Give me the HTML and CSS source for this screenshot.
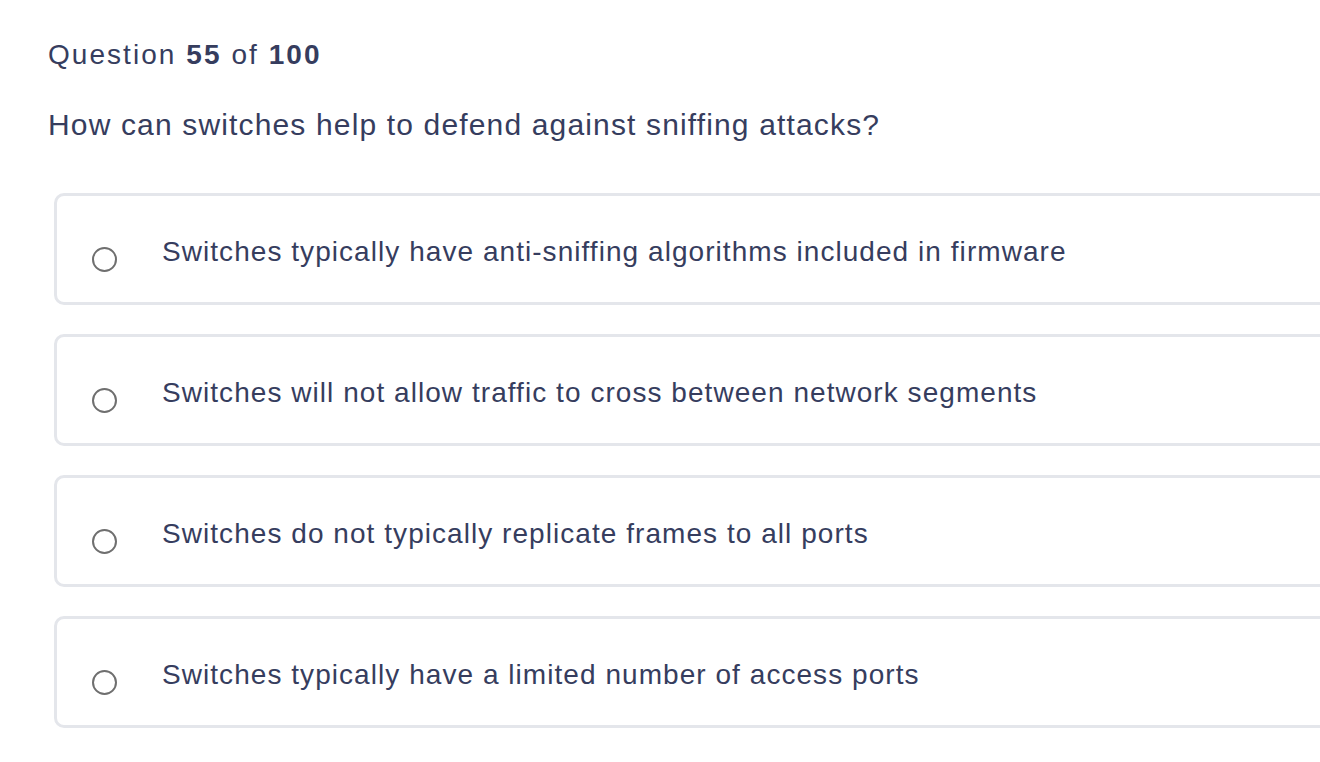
FILE: index.html
```
<!DOCTYPE html>
<html>
<head>
<meta charset="utf-8">
<link rel="stylesheet" href="styles.css">
</head>
<body>
<main class="quiz">
  <div class="counter">Question <b>55</b> of <b>100</b></div>
  <p class="question">How can switches help to defend against sniffing attacks?</p>
  <ul class="options">
    <li class="option"><span class="radio"></span><span class="label">Switches typically have anti-sniffing algorithms included in firmware</span></li>
    <li class="option"><span class="radio"></span><span class="label">Switches will not allow traffic to cross between network segments</span></li>
    <li class="option"><span class="radio"></span><span class="label">Switches do not typically replicate frames to all ports</span></li>
    <li class="option"><span class="radio"></span><span class="label">Switches typically have a limited number of access ports</span></li>
  </ul>
</main>
</body>
</html>
```
FILE: styles.css
```
html, body {
  margin: 0;
  padding: 0;
  background: #ffffff;
  overflow: hidden;
}
body {
  font-family: "Liberation Sans", Arial, sans-serif;
  color: #363d5e;
  width: 1320px;
  height: 762px;
}
.quiz {
  padding: 37px 0 0 48px;
}
.counter {
  font-size: 28px;
  line-height: 36px;
  letter-spacing: 2.05px;
}
.counter b {
  font-weight: 700;
}
.question {
  margin: 32px 0 0 0;
  font-size: 30px;
  line-height: 40px;
  letter-spacing: 1.15px;
}
.options {
  list-style: none;
  margin: 48px -200px 0 6px;
  padding: 0;
  display: flex;
  flex-direction: column;
  gap: 29px;
}
.option {
  box-sizing: border-box;
  height: 112px;
  border: 3px solid #e4e6eb;
  border-radius: 10px;
  display: flex;
  align-items: center;
  padding: 0 0 0 35px;
}
.radio {
  box-sizing: border-box;
  width: 25px;
  height: 25px;
  border: 2px solid #6f6f6f;
  border-radius: 50%;
  flex: none;
  margin-top: 20px;
}
.label {
  margin-left: 45px;
  margin-top: 6px;
  font-size: 28px;
  line-height: 36px;
  letter-spacing: 1.05px;
}
```
